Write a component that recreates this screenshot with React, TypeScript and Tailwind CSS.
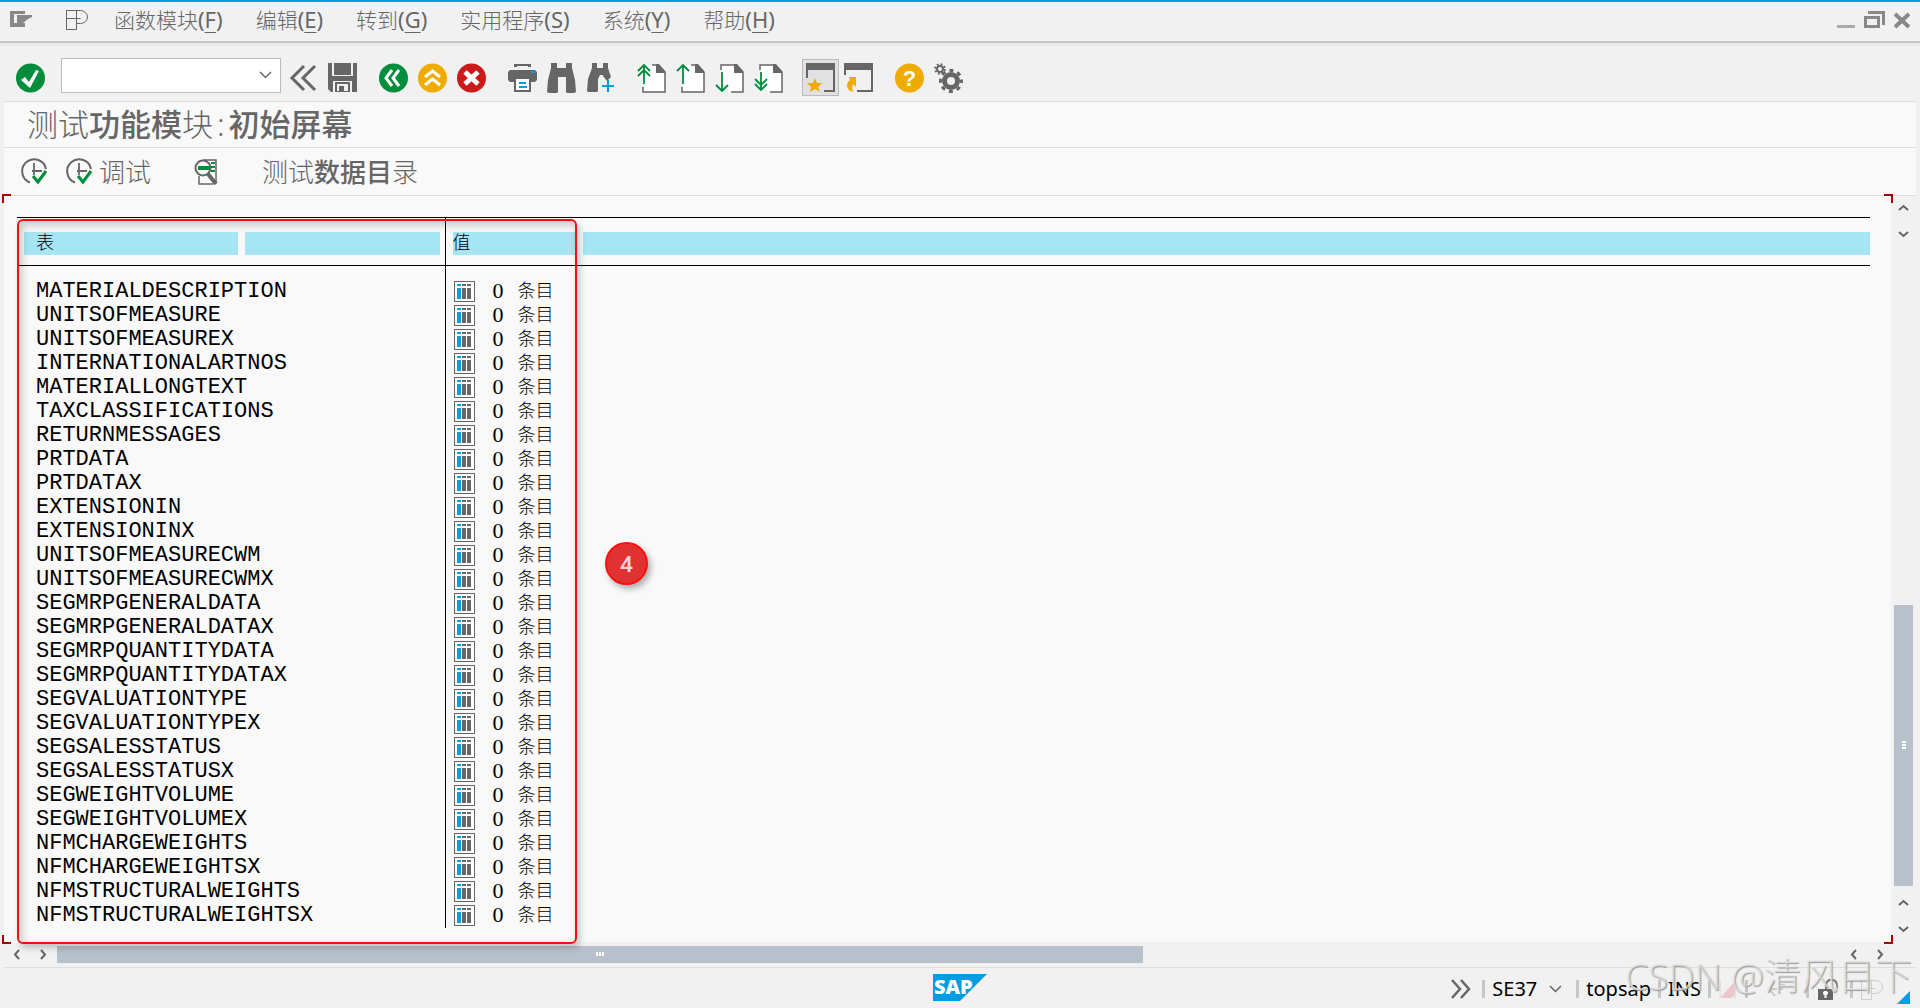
import type { ReactNode } from 'react'

const menus = [
  { label: '函数模块', hotkey: 'F' },
  { label: '编辑', hotkey: 'E' },
  { label: '转到', hotkey: 'G' },
  { label: '实用程序', hotkey: 'S' },
  { label: '系统', hotkey: 'Y' },
  { label: '帮助', hotkey: 'H' },
]

const tables = [
  'MATERIALDESCRIPTION',
  'UNITSOFMEASURE',
  'UNITSOFMEASUREX',
  'INTERNATIONALARTNOS',
  'MATERIALLONGTEXT',
  'TAXCLASSIFICATIONS',
  'RETURNMESSAGES',
  'PRTDATA',
  'PRTDATAX',
  'EXTENSIONIN',
  'EXTENSIONINX',
  'UNITSOFMEASURECWM',
  'UNITSOFMEASURECWMX',
  'SEGMRPGENERALDATA',
  'SEGMRPGENERALDATAX',
  'SEGMRPQUANTITYDATA',
  'SEGMRPQUANTITYDATAX',
  'SEGVALUATIONTYPE',
  'SEGVALUATIONTYPEX',
  'SEGSALESSTATUS',
  'SEGSALESSTATUSX',
  'SEGWEIGHTVOLUME',
  'SEGWEIGHTVOLUMEX',
  'NFMCHARGEWEIGHTS',
  'NFMCHARGEWEIGHTSX',
  'NFMSTRUCTURALWEIGHTS',
  'NFMSTRUCTURALWEIGHTSX',
]

function IconButton({ label, children, className = '' }: { label: string; children: ReactNode; className?: string }) {
  return (
    <button type="button" aria-label={label} className={`flex shrink-0 items-center justify-center ${className}`}>
      {children}
    </button>
  )
}

function Chevron({ dir }: { dir: 'up' | 'down' | 'left' | 'right' }) {
  const paths = {
    up: 'M1 7 5.5 3 10 7',
    down: 'M1 4 5.5 8 10 4',
    left: 'M7 1 3 5.5 7 10',
    right: 'M4 1 8 5.5 4 10',
  }
  return (
    <svg width="11" height="11" viewBox="0 0 11 11" fill="none" stroke="#666" strokeWidth="2">
      <path d={paths[dir]} />
    </svg>
  )
}

function Round({ fill, children }: { fill: string; children: ReactNode }) {
  return (
    <svg width="29" height="30" viewBox="0 0 29 30">
      <circle cx="14.5" cy="15" r="14.5" fill={fill} />
      {children}
    </svg>
  )
}

/* Sheet with a folded corner, the arrow tells which way to page */
function PageIcon({ kind }: { kind: 'first' | 'prev' | 'next' | 'last' }) {
  const arrows = {
    first: 'M7 21V3M1 8l6-6 6 6M1 13l6-6 6 6',
    prev: 'M7 21V2M1 8l6-6 6 6',
    next: 'M7 9v19M1 22l6 6 6-6',
    last: 'M7 9v18M1 16l6 6 6-6M1 21l6 6 6-6',
  }
  const up = kind === 'first' || kind === 'prev'
  return (
    <svg width="29" height="30" viewBox="0 0 29 30" fill="none">
      <path d={up ? 'M10 2h11l7 8v19H7V14z' : 'M7 2h14l7 8v19H15l-8-8z'} fill="#fff" />
      <path d={up ? 'M15 2h6l7 7v20H6v-5' : 'M6 7V2h15l7 7v20H16'} stroke="#666" strokeWidth="1.5" />
      <path d="M19 1h3l6 7v2h-9z" fill="#666" />
      <path d={arrows[kind]} stroke="#008d3c" strokeWidth="1.8" />
    </svg>
  )
}

function ClockCheck() {
  return (
    <svg width="27" height="27" viewBox="0 0 27 27" fill="none">
      <path d="M9 24.5A12 12 0 1 1 25 11" stroke="#666" strokeWidth="2" />
      <path d="M13 5v12M11 13h10" stroke="#666" strokeWidth="1.8" />
      <path d="M12 18l5 6 8-11" stroke="#008d3c" strokeWidth="3" />
    </svg>
  )
}

function TableIcon() {
  return (
    <svg width="21" height="21" viewBox="0 0 21 21" className="block">
      <rect x="0.5" y="0.5" width="20" height="20" fill="#fff" stroke="#666" />
      <path d="M3 3h4v2H3zM3 7h4v11H3z" fill="#009de0" />
      <path d="M8 3h4v2H8zM13 3h4v2h-4zM8 7h4v11H8zM13 7h4v11h-4z" fill="#666" />
    </svg>
  )
}

function Separator() {
  return <span className="h-[18px] w-[3px] shrink-0 bg-[#c6c6c6]" />
}

function MenuBar() {
  return (
    <header className="flex h-[46px] items-center border-t-2 border-[#009de0] bg-[#f1f1f1] pb-[10px] text-[21px] leading-8 text-[#666] shadow-[inset_0_-3px_0_#e9e9e9,inset_0_-5px_0_#c6c6c6]">
      <IconButton label="菜单" className="ml-[10px]">
        <svg width="23" height="18" viewBox="0 0 23 18" fill="#888">
          <path d="M0 1h15v3H4v9h11v4H0z" />
          <path d="M7 5h15v2l-4 2-5 4H7z" />
        </svg>
      </IconButton>
      <IconButton label="P" className="ml-[33px]">
        <svg width="23" height="21" viewBox="0 0 23 21" fill="none" stroke="#666">
          <path d="M.5 1.5h14a7 6.5 0 0 1 0 13h-4v6h-10zM10.5 1.5v8H.5M10.500 14.5v-5h4" />
        </svg>
      </IconButton>
      <nav className="ml-[25px] flex gap-[33px]">
        {menus.map((menu) => (
          <button key={menu.hotkey} type="button" className="font-light whitespace-nowrap">
            {menu.label}
            <span className="text-[22px] font-normal">
              (<u className="decoration-1 underline-offset-4">{menu.hotkey}</u>)
            </span>
          </button>
        ))}
      </nav>
      <div className="mt-0.5 mr-[10px] ml-auto flex items-center gap-[9px]">
        <IconButton label="最小化">
          <svg width="18" height="18" viewBox="0 0 18 18">
            <path d="M0 14h18v3H0z" fill="#aaa" />
          </svg>
        </IconButton>
        <IconButton label="还原">
          <svg width="21" height="18" viewBox="0 0 21 18" fill="none" stroke="#888" strokeWidth="3">
            <path d="M1.5 6.5h13v9h-13zM4 1.5h15.5V14" />
          </svg>
        </IconButton>
        <IconButton label="关闭">
          <svg width="16" height="18" viewBox="0 0 16 18" stroke="#888" strokeWidth="4">
            <path d="M1 3l14 13M15 3 1 16" />
          </svg>
        </IconButton>
      </div>
    </header>
  )
}

function ToolBar() {
  return (
    <div className="mx-1 flex h-14 items-center border-b border-[#ddd] bg-[#f1f1f1] pt-2 pl-3">
      <IconButton label="确认">
        <Round fill="#008d3c">
          <path d="M5 17l4-3 4 5 7-12 3 1-9 17z" fill="#fff" />
        </Round>
      </IconButton>
      <div className="relative mt-1 ml-4 h-[35px] w-[220px] self-start">
        <input aria-label="命令" className="h-full w-full border border-[#bbb] bg-white px-2 text-lg outline-none" />
        <svg className="absolute top-3 right-[9px]" width="13" height="10" viewBox="0 0 13 10" fill="none" stroke="#666" strokeWidth="1.5">
          <path d="M1 2l5.5 5.5L12 2" />
        </svg>
      </div>
      <div className="ml-2 flex gap-[11px]">
        <IconButton label="后退">
          <svg width="28" height="30" viewBox="0 0 28 30" fill="none" stroke="#666" strokeWidth="3">
            <path d="M15 3 3 15l12 12M26 3 14 15l12 12" />
          </svg>
        </IconButton>
        <IconButton label="保存">
          <svg width="29" height="30" viewBox="0 0 29 30">
            <path d="M0 0h4v13h21V0h4v29H3l-3-3z" fill="#666" />
            <path d="M6 0h17v12H6z" fill="#666" />
            <path d="M5 18h19v11H5z" fill="#f1f1f1" />
            <path d="M7 19h15v10H7z" fill="#666" />
            <path d="M9 21h11v7H9z" fill="#f1f1f1" />
            <path d="M11 23h5v5h-5z" fill="#666" />
          </svg>
        </IconButton>
      </div>
      <div className="ml-[22px] flex gap-[10px]">
        <IconButton label="返回">
          <Round fill="#008d3c">
            <path d="M13 7l-6 8 6 8M20 7l-6 8 6 8" fill="none" stroke="#fff" strokeWidth="3" />
          </Round>
        </IconButton>
        <IconButton label="退出">
          <Round fill="#f0ab00">
            <path d="M7 14l7.5-6 7.5 6M7 22l7.5-6 7.5 6" fill="none" stroke="#fff" strokeWidth="3" />
          </Round>
        </IconButton>
        <IconButton label="取消">
          <Round fill="#cc1919">
            <path d="M8 9l13 12M21 9 8 21" fill="none" stroke="#fff" strokeWidth="5" />
          </Round>
        </IconButton>
      </div>
      <div className="ml-[22px] flex gap-[10px]">
        <IconButton label="打印">
          <svg width="29" height="30" viewBox="0 0 29 30">
            <path d="M6 4V1h17v3h-3V3H9v1z" fill="#666" />
            <path d="M2 7h25l2 2v8l-2 2H2l-2-2V9z" fill="#666" />
            <path d="M23 8h4v2h-4z" fill="#009de0" />
            <path d="M7 15h15v13H7z" fill="#fff" stroke="#666" strokeWidth="2" />
            <path d="M11 20h7M11 24h8" stroke="#009de0" strokeWidth="2" />
          </svg>
        </IconButton>
        <IconButton label="查找">
          <svg width="29" height="30" viewBox="0 0 29 30" fill="#666">
            <path d="M4 0h6v5h9V0h6v5l3 12 1 12-2 1h-7l-1-1V14h-8v15l-1 1H2l-2-1 1-12L4 5z" />
          </svg>
        </IconButton>
        <IconButton label="继续查找">
          <svg width="29" height="30" viewBox="0 0 29 30" fill="none">
            <path d="M6 0h5v5h6V0h5v5l3 9-4 4-4-5v-1h-3l-2 4v12l-1 1H2l-1-1 1-12L6 5z" fill="#666" />
            <path d="M22 17v12M16 23h12" stroke="#009de0" strokeWidth="2" />
          </svg>
        </IconButton>
      </div>
      <div className="ml-[22px] flex gap-[10px]">
        <IconButton label="第一页"><PageIcon kind="first" /></IconButton>
        <IconButton label="上一页"><PageIcon kind="prev" /></IconButton>
        <IconButton label="下一页"><PageIcon kind="next" /></IconButton>
        <IconButton label="最后一页"><PageIcon kind="last" /></IconButton>
      </div>
      <IconButton label="新建会话" className="ml-[19px] h-[37px] w-[37px] border border-[#bbb] bg-[#e1e1e1]">
        <svg width="29" height="29" viewBox="0 0 29 29">
          <path d="M0 0h29v29H18v-2h9V7H2v8H0z" fill="#666" />
          <path d="m9 15 2 5h5l-4 4 2 5-5-3-5 3 1-5-4-4h6z" fill="#f0ab00" />
        </svg>
      </IconButton>
      <IconButton label="创建快捷方式" className="ml-[5px]">
        <svg width="29" height="30" viewBox="0 0 29 30">
          <path d="M0 0h29v29H13v-2h14V7H2v5H0z" fill="#666" />
          <path d="M5 14h7v10l-3-3q-2 5 1 8-7-1-7-7 0-3 3-5z" fill="#f0ab00" />
        </svg>
      </IconButton>
      <div className="ml-[22px] flex gap-[10px]">
        <IconButton label="帮助">
          <Round fill="#f0ab00">
            <text x="14.5" y="23" textAnchor="middle" fill="#fff" fontSize="22" fontWeight="700" fontFamily="Liberation Sans, sans-serif">?</text>
          </Round>
        </IconButton>
        <IconButton label="定制本地布局">
          <svg width="29" height="30" viewBox="0 0 29 30" fill="none" stroke="#666">
            <circle cx="17" cy="18" r="6.5" strokeWidth="5" />
            <circle cx="17" cy="18" r="10.5" strokeWidth="3" strokeDasharray="4.1 4.146" strokeDashoffset="2" />
            <circle cx="6" cy="6" r="3" strokeWidth="2" />
            <circle cx="6" cy="6" r="4.8" strokeWidth="2" strokeDasharray="1.9 1.87" />
          </svg>
        </IconButton>
      </div>
    </div>
  )
}

function TitleBar() {
  return (
    <div className="mx-1 flex h-[46px] items-center border-b border-[#ddd] bg-[#f9f9f9] pb-0.5 pl-[23px]">
      <h1 className="text-[31px] leading-10 font-light text-[#666]">
        测试<span className="font-medium">功能模</span>块<span className="mx-1">:</span>
        <span className="font-medium">初始屏幕</span>
      </h1>
    </div>
  )
}

function ApplicationBar() {
  return (
    <div className="mx-1 flex h-12 items-center border-b border-[#ddd] bg-[#f9f9f9] pl-[17px] text-[26px] leading-8 font-light text-[#666]">
      <IconButton label="执行"><ClockCheck /></IconButton>
      <button type="button" className="ml-[18px] flex items-center gap-1.5">
        <ClockCheck />
        <span>调试</span>
      </button>
      <IconButton label="测试数据" className="ml-[43px]">
        <svg width="24" height="26" viewBox="0 0 24 26" fill="none">
          <path d="M9 1h13v22M5 17v8h14" stroke="#666" strokeWidth="1.5" />
          <path d="M17 4h4M17 8h4M17 12h4" stroke="#008d3c" strokeWidth="2" />
          <circle cx="9" cy="9" r="7.5" fill="#f9f9f9" stroke="#666" strokeWidth="2" />
          <path d="M4 7h12v4H4z" fill="#008d3c" />
          <path d="m14 15 8 10" stroke="#666" strokeWidth="4" />
        </svg>
      </IconButton>
      <button type="button" className="ml-11">
        测试<span className="font-medium">数据目</span>录
      </button>
    </div>
  )
}

function ParameterTable() {
  return (
    <table className="w-full table-fixed border-collapse font-['Liberation_Mono','Noto_Sans_CJK_SC',monospace] text-[22px] leading-6 text-black">
      <colgroup>
        <col className="w-[428px]" />
        <col />
      </colgroup>
      <thead>
        <tr className="h-12 border-y border-black text-left text-[18px]">
          <th className="border-r border-black p-0 pt-1 font-light">
            <div className="mr-[5px] ml-[7px] flex gap-[7px]">
              <span className="h-[23px] w-[214px] bg-[#a6e5f4] pl-3">表</span>
              <span className="h-[23px] flex-1 bg-[#a6e5f4]" />
            </div>
          </th>
          <th className="p-0 pt-1 font-light">
            <div className="ml-[7px] flex gap-[7px]">
              <span className="h-[23px] w-[123px] bg-[#a6e5f4]">值</span>
              <span className="h-[23px] flex-1 bg-[#a6e5f4]" />
            </div>
          </th>
        </tr>
      </thead>
      <tbody>
        <tr className="h-[14px]">
          <td className="border-r border-black p-0" />
          <td className="p-0" />
        </tr>
        {tables.map((name) => (
          <tr key={name} className="h-6">
            <td className="border-r border-black p-0 pl-[19px]">{name}</td>
            <td className="p-0 pl-2">
              <div className="flex h-6 items-center">
                <IconButton label={`${name} 条目`}><TableIcon /></IconButton>
                <span className="ml-[18px] w-[25px] pb-0.5 font-['Liberation_Serif',serif]">0</span>
                <span className="text-[18px] font-light">条目</span>
              </div>
            </td>
          </tr>
        ))}
      </tbody>
    </table>
  )
}

function VerticalScroll() {
  return (
    <div className="flex w-[25px] shrink-0 flex-col items-center bg-[#f1f1f1] pt-[7px] pb-2">
      <IconButton label="向上"><Chevron dir="up" /></IconButton>
      <IconButton label="向下" className="mt-[14px]"><Chevron dir="down" /></IconButton>
      <div className="mt-2 flex w-[19px] flex-1 flex-col justify-end">
        <div className="flex h-[44%] flex-col items-center justify-center gap-px bg-[#b7c1cb]">
          <i className="h-0.5 w-1 bg-white" />
          <i className="h-0.5 w-1 bg-white" />
          <i className="h-0.5 w-1 bg-white" />
        </div>
      </div>
      <IconButton label="向上" className="mt-3"><Chevron dir="up" /></IconButton>
      <IconButton label="向下" className="mt-[14px]"><Chevron dir="down" /></IconButton>
    </div>
  )
}

function HorizontalScroll() {
  return (
    <div className="mx-1 flex h-[26px] items-center border-b border-[#ddd] bg-[#f1f1f1] pl-2">
      <IconButton label="向左"><Chevron dir="left" /></IconButton>
      <IconButton label="向右" className="ml-[14px]"><Chevron dir="right" /></IconButton>
      <div className="mr-3 ml-[9px] flex h-[17px] flex-1">
        <div className="flex w-[61%] items-center justify-center gap-px bg-[#b7c1cb]">
          <i className="h-1 w-0.5 bg-white" />
          <i className="h-1 w-0.5 bg-white" />
          <i className="h-1 w-0.5 bg-white" />
        </div>
      </div>
      <IconButton label="向左"><Chevron dir="left" /></IconButton>
      <IconButton label="向右" className="mr-[31px] ml-[14px]"><Chevron dir="right" /></IconButton>
    </div>
  )
}

function StatusBar() {
  return (
    <footer className="relative grid h-10 grid-cols-[1fr_auto_1fr] items-center bg-[#f1f1f1] font-['Noto_Sans','Noto_Sans_CJK_SC',sans-serif] text-[20px] leading-8 text-black">
      <svg className="col-start-2" width="54" height="27" viewBox="0 0 54 27" role="img" aria-label="SAP">
        <path d="M0 0h54L27 27H0z" fill="#009de0" />
        <text x="1" y="20" fill="#fff" fontSize="20" fontWeight="800" fontFamily="Open Sans, sans-serif">SAP</text>
      </svg>
      <div className="flex items-center justify-end pt-[3px] pr-[10px]">
        <IconButton label="展开">
          <svg width="20" height="20" viewBox="0 0 20 20" fill="none" stroke="#666" strokeWidth="2.5">
            <path d="m1 1 8 9-8 9M10 1l8 9-8 9" />
          </svg>
        </IconButton>
        <div className="ml-[11px] flex items-center gap-[7px]">
          <Separator />
          <button type="button" className="flex items-center gap-3">
            SE37
            <svg width="13" height="10" viewBox="0 0 13 10" fill="none" stroke="#666" strokeWidth="1.5">
              <path d="M1 2l5.5 5.5L12 2" />
            </svg>
          </button>
        </div>
        <div className="ml-[14px] flex items-center gap-[7px]">
          <Separator />
          <span>topsap</span>
          <Separator />
          <span>INS</span>
          <Separator />
        </div>
        <svg className="ml-2" width="18" height="22" viewBox="0 0 18 22" role="img" aria-label="响应时间">
          <path d="M1 20 16 3v14l-4 3z" fill="#f0c6cd" />
          <path d="M1 2v18M16 4v17" stroke="#d8d8d8" />
        </svg>
        <div className="ml-2 flex items-center gap-[19px]">
          <Separator />
          <svg width="20" height="18" viewBox="0 0 20 18" fill="none" stroke="#ccc" strokeWidth="2" role="img" aria-label="连接">
            <path d="M8 2 2 9l6 7M3 9h7M12 5h6M12 9h4" />
          </svg>
          <Separator />
        </div>
        <svg className="ml-2" width="24" height="24" viewBox="0 0 24 24" role="img" aria-label="未加密">
          <path d="M9 12V8q1-6 7-5 4 1 4 6v2" fill="none" stroke="#777" strokeWidth="2" />
          <path d="M1 12h15v11H1z" fill="#666" />
          <path d="M8.5 14a2 2 0 0 1 1 4v3h-2v-3a2 2 0 0 1 1-4z" fill="#fff" />
        </svg>
        <div className="ml-[9px] flex items-center gap-2">
          <Separator />
          <svg width="23" height="21" viewBox="0 0 23 21" fill="none" stroke="#ccc" role="img" aria-label="P">
            <path d="M.5 1.5h14a7 6.5 0 0 1 0 13h-4v6h-10zM10.5 1.5v8H.5M10.5 14.5v-5h4" />
          </svg>
        </div>
        <svg className="mt-[17px] ml-[13px]" width="13" height="13" viewBox="0 0 13 13">
          <path d="M13 0v13H0z" fill="#009de0" />
        </svg>
      </div>
      <span className="pointer-events-none absolute right-2 bottom-3 text-[37px] leading-10 font-light whitespace-nowrap text-[#e9e9e9]/70 [text-shadow:1px_1px_1px_#999]">
        CSDN @清风目下
      </span>
    </footer>
  )
}

export default function App() {
  return (
    <div className="min-h-screen overflow-hidden bg-[#f1f1f1] font-['Noto_Sans','Noto_Sans_CJK_SC',sans-serif]">
      <MenuBar />
      <ToolBar />
      <TitleBar />
      <ApplicationBar />
      <main className="mx-1 flex">
        <div className="relative flex-1 bg-[#f9f9f9] pt-[21px] pr-[21px] pb-[14px] pl-[13px]">
          <ParameterTable />
          <i className="absolute -top-0.5 -left-0.5 h-[9px] w-[9px] border-t-2 border-l-2 border-[#a80000]" />
          <i className="absolute -top-0.5 -right-0.5 h-[9px] w-[9px] border-t-2 border-r-2 border-[#a80000]" />
          <i className="absolute -bottom-0.5 -left-0.5 h-[9px] w-[9px] border-b-2 border-l-2 border-[#a80000]" />
          <i className="absolute -right-0.5 -bottom-0.5 h-[9px] w-[9px] border-r-2 border-b-2 border-[#a80000]" />
          <div className="pointer-events-none absolute top-[23px] -bottom-0.5 left-[13px] w-[560px] rounded-md border-2 border-[#f41010] shadow-[3px_4px_6px_rgba(0,0,0,0.2),inset_3px_4px_8px_rgba(0,0,0,0.2)]" />
          <span className="absolute top-[346px] left-[601px] flex h-[43px] w-[43px] items-center justify-center rounded-full border-2 border-[#ff1010] bg-[#e03232] text-[22px] font-semibold text-[#ffd2d2] shadow-[3px_4px_6px_rgba(0,0,0,0.3)]">
            4
          </span>
        </div>
        <VerticalScroll />
      </main>
      <HorizontalScroll />
      <StatusBar />
    </div>
  )
}
